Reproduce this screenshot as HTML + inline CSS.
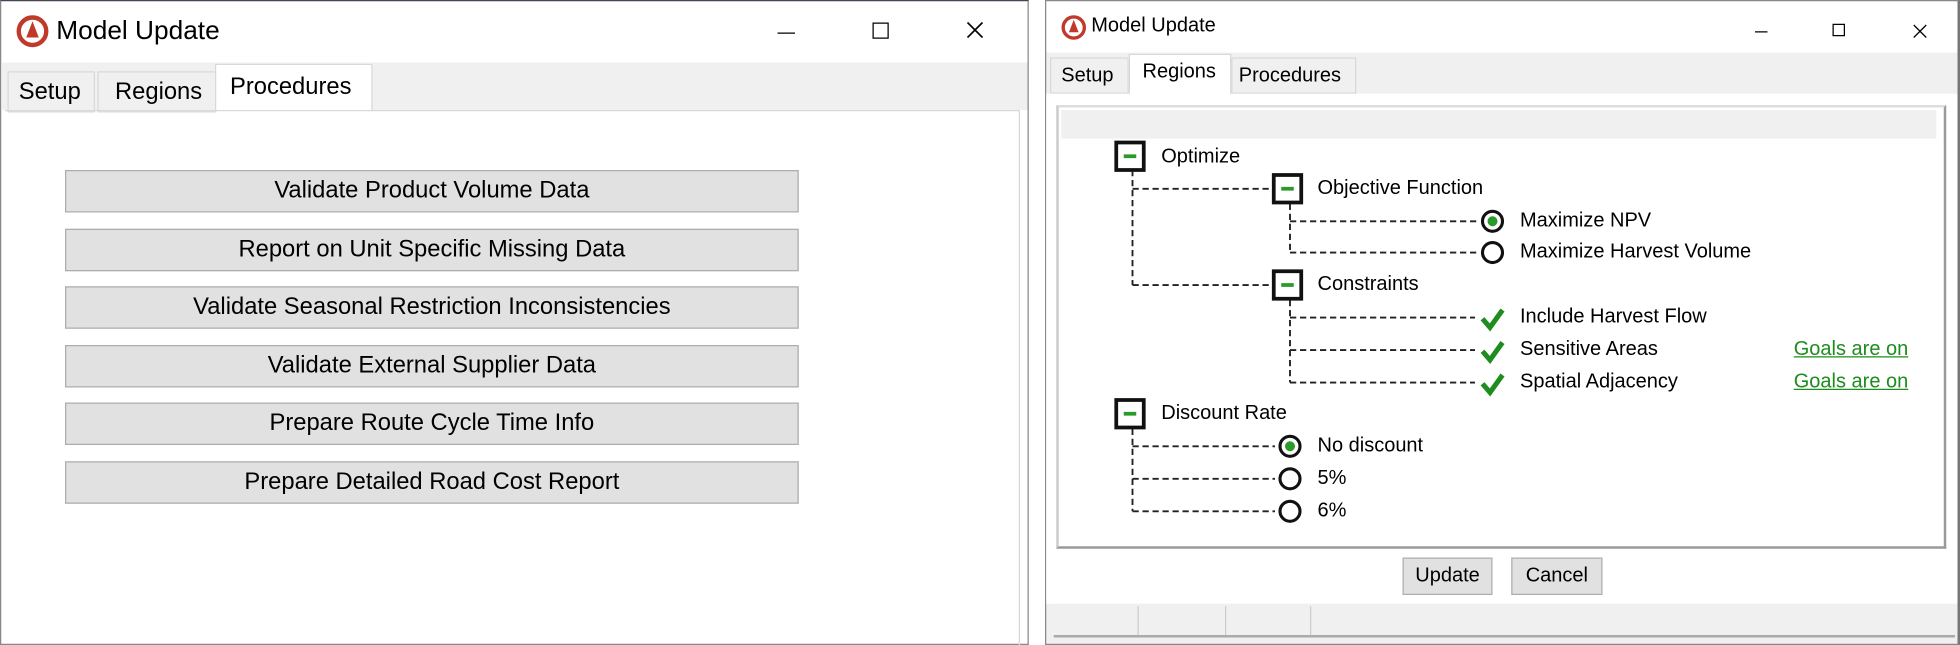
<!DOCTYPE html>
<html><head><meta charset="utf-8"><style>
*{margin:0;padding:0;box-sizing:border-box}
body{width:1960px;height:645px;background:#fff;position:relative;overflow:hidden;font-family:"Liberation Sans",sans-serif;color:#000}
#w{position:absolute;left:0;top:0;width:1568px;height:516px;transform:scale(1.25);transform-origin:0 0}
.a{position:absolute}
.btn{position:absolute;left:52px;width:587px;height:34px;background:#e1e1e1;border:1px solid #adadad;font-size:19px;text-align:center;line-height:32px}
.t{position:absolute;font-size:16px;line-height:20px;white-space:nowrap}
.lk{color:#1e8c1e;text-decoration:underline}
</style></head><body><div id="w">
<!-- left window -->
<div class="a" style="left:0;top:0;width:823px;height:516px;border:1px solid #888;border-top:1px solid #445"></div>
<div class="a" style="left:1px;top:50px;width:821px;height:38px;background:#f0f0f0"></div>
<svg class="a" style="left:13px;top:12px" width="26" height="26" viewBox="0 0 26 26"><circle cx="13" cy="13" r="11" fill="none" stroke="#c0392b" stroke-width="3.5"/><path d="M13 5 L18 18 L8 18 Z" fill="#c0392b"/></svg>
<div class="a" style="left:45px;top:13px;font-size:21px">Model Update</div>
<div class="a" style="left:622px;top:26px;width:14px;border-top:1.2px solid #000"></div>
<div class="a" style="left:698px;top:18px;width:13px;height:13px;border:1.2px solid #000"></div>
<svg class="a" style="left:773px;top:17px" width="14" height="14"><path d="M1 1L13 13M13 1L1 13" stroke="#000" stroke-width="1.3"/></svg>
<div class="a" style="left:6px;top:57px;width:70px;height:33px;background:#f0f0f0;border:1px solid #d9d9d9;font-size:19px;padding:5px 0 0 8px">Setup</div>
<div class="a" style="left:78px;top:57px;width:95px;height:33px;background:#f0f0f0;border:1px solid #d9d9d9;font-size:19px;padding:5px 0 0 13px">Regions</div>
<div class="a" style="left:172px;top:51px;width:126px;height:38px;background:#fff;border:1px solid #d9d9d9;border-bottom:none;font-size:19px;padding:7px 0 0 11px">Procedures</div>
<div class="a" style="left:4px;top:88px;width:812px;height:428px;border-top:1px solid #d9d9d9;border-right:1px solid #d9d9d9"></div>
<div class="btn" style="top:136px">Validate Product Volume Data</div>
<div class="btn" style="top:183px">Report on Unit Specific Missing Data</div>
<div class="btn" style="top:229px">Validate Seasonal Restriction Inconsistencies</div>
<div class="btn" style="top:276px">Validate External Supplier Data</div>
<div class="btn" style="top:322px">Prepare Route Cycle Time Info</div>
<div class="btn" style="top:369px">Prepare Detailed Road Cost Report</div>

<!-- right window -->
<div class="a" style="left:837px;top:42px;width:729px;height:473px;background:#f0f0f0"></div>
<div class="a" style="left:836px;top:0;width:732px;height:516px;border:1px solid #888;border-right:2px solid #777"></div>
<svg class="a" style="left:849px;top:12px" width="20" height="20" viewBox="0 0 26 26"><circle cx="13" cy="13" r="11" fill="none" stroke="#c0392b" stroke-width="3.5"/><path d="M13 5 L18 18 L8 18 Z" fill="#c0392b"/></svg>
<div class="a" style="left:873px;top:12px;font-size:16px">Model Update</div>
<div class="a" style="left:1404px;top:25px;width:10px;border-top:1px solid #000"></div>
<div class="a" style="left:1466px;top:19px;width:10px;height:10px;border:1px solid #000"></div>
<svg class="a" style="left:1530px;top:19px" width="12" height="12"><path d="M1 1L11 11M11 1L1 11" stroke="#000" stroke-width="1"/></svg>
<div class="a" style="left:840px;top:46px;width:63px;height:29px;border:1px solid #d9d9d9;font-size:16px;padding:5px 0 0 8px">Setup</div>
<div class="a" style="left:903px;top:43px;width:82px;height:33px;background:#fff;border:1px solid #d9d9d9;border-bottom:none;font-size:16px;padding:5px 0 0 10px">Regions</div>
<div class="a" style="left:985px;top:46px;width:100px;height:29px;border:1px solid #d9d9d9;font-size:16px;padding:5px 0 0 5px">Procedures</div>
<div class="a" style="left:837px;top:75px;width:729px;height:408px;background:#fff"></div>
<div class="a" style="left:845px;top:84px;width:712px;height:355px;background:#fff;border:2px solid #9a9a9a;border-top-color:#ddd;border-left-color:#ccc"></div>
<div class="a" style="left:849px;top:88px;width:700px;height:23px;background:#f0f0f0"></div>
<svg class="a" style="left:0;top:0" width="1568" height="516">
<g stroke="#222" stroke-width="1.5" stroke-dasharray="5,3" fill="none">
<path d="M906 136V228M906 151H1018M906 228H1018"/>
<path d="M1032 163V202M1032 177H1183M1032 202H1183"/>
<path d="M1032 240V306M1032 254H1180M1032 280H1180M1032 306H1180"/>
<path d="M906 343V409M906 357H1020M906 383H1020M906 409H1020"/>
</g>
<g fill="#fff" stroke="#111" stroke-width="3">
<rect x="893" y="114" width="22" height="22"/><rect x="1019" y="140" width="22" height="22"/><rect x="1019" y="217" width="22" height="22"/><rect x="893" y="320" width="22" height="22"/>
</g>
<g stroke="#2a9a2a" stroke-width="3">
<path d="M899 125H909M1025 151H1035M1025 228H1035M899 331H909"/>
</g>
<g fill="none" stroke="#111" stroke-width="2.5">
<circle cx="1194" cy="177" r="8"/><circle cx="1194" cy="202" r="8"/>
<circle cx="1032" cy="357" r="8"/><circle cx="1032" cy="383" r="8"/><circle cx="1032" cy="409" r="8"/>
</g>
<circle cx="1194" cy="177" r="4" fill="#2a9a2a"/><circle cx="1032" cy="357" r="4" fill="#2a9a2a"/>
<g fill="none" stroke="#1e8c1e" stroke-width="4">
<path d="M1186 255L1192 262L1202 248M1186 281L1192 288L1202 274M1186 307L1192 314L1202 300"/>
</g>
</svg>
<div class="t" style="left:929px;top:116px">Optimize</div>
<div class="t" style="left:1054px;top:141px">Objective Function</div>
<div class="t" style="left:1216px;top:167px">Maximize NPV</div>
<div class="t" style="left:1216px;top:192px">Maximize Harvest Volume</div>
<div class="t" style="left:1054px;top:218px">Constraints</div>
<div class="t" style="left:1216px;top:244px">Include Harvest Flow</div>
<div class="t" style="left:1216px;top:270px">Sensitive Areas</div>
<div class="t lk" style="left:1435px;top:270px">Goals are on</div>
<div class="t" style="left:1216px;top:296px">Spatial Adjacency</div>
<div class="t lk" style="left:1435px;top:296px">Goals are on</div>
<div class="t" style="left:929px;top:321px">Discount Rate</div>
<div class="t" style="left:1054px;top:347px">No discount</div>
<div class="t" style="left:1054px;top:373px">5%</div>
<div class="t" style="left:1054px;top:399px">6%</div>
<div class="a" style="left:1122px;top:446px;width:72px;height:30px;background:#e1e1e1;border:1px solid #adadad;font-size:16px;text-align:center;line-height:28px">Update</div>
<div class="a" style="left:1209px;top:446px;width:73px;height:30px;background:#e1e1e1;border:1px solid #adadad;font-size:16px;text-align:center;line-height:28px">Cancel</div>
<div class="a" style="left:843px;top:483px;width:721px;height:27px;background:#f0f0f0;border-bottom:2px solid #aaa"></div>
<div class="a" style="left:910px;top:485px;width:1px;height:23px;background:#ccc"></div>
<div class="a" style="left:980px;top:485px;width:1px;height:23px;background:#ccc"></div>
<div class="a" style="left:1048px;top:485px;width:1px;height:23px;background:#ccc"></div>
</div></body></html>
